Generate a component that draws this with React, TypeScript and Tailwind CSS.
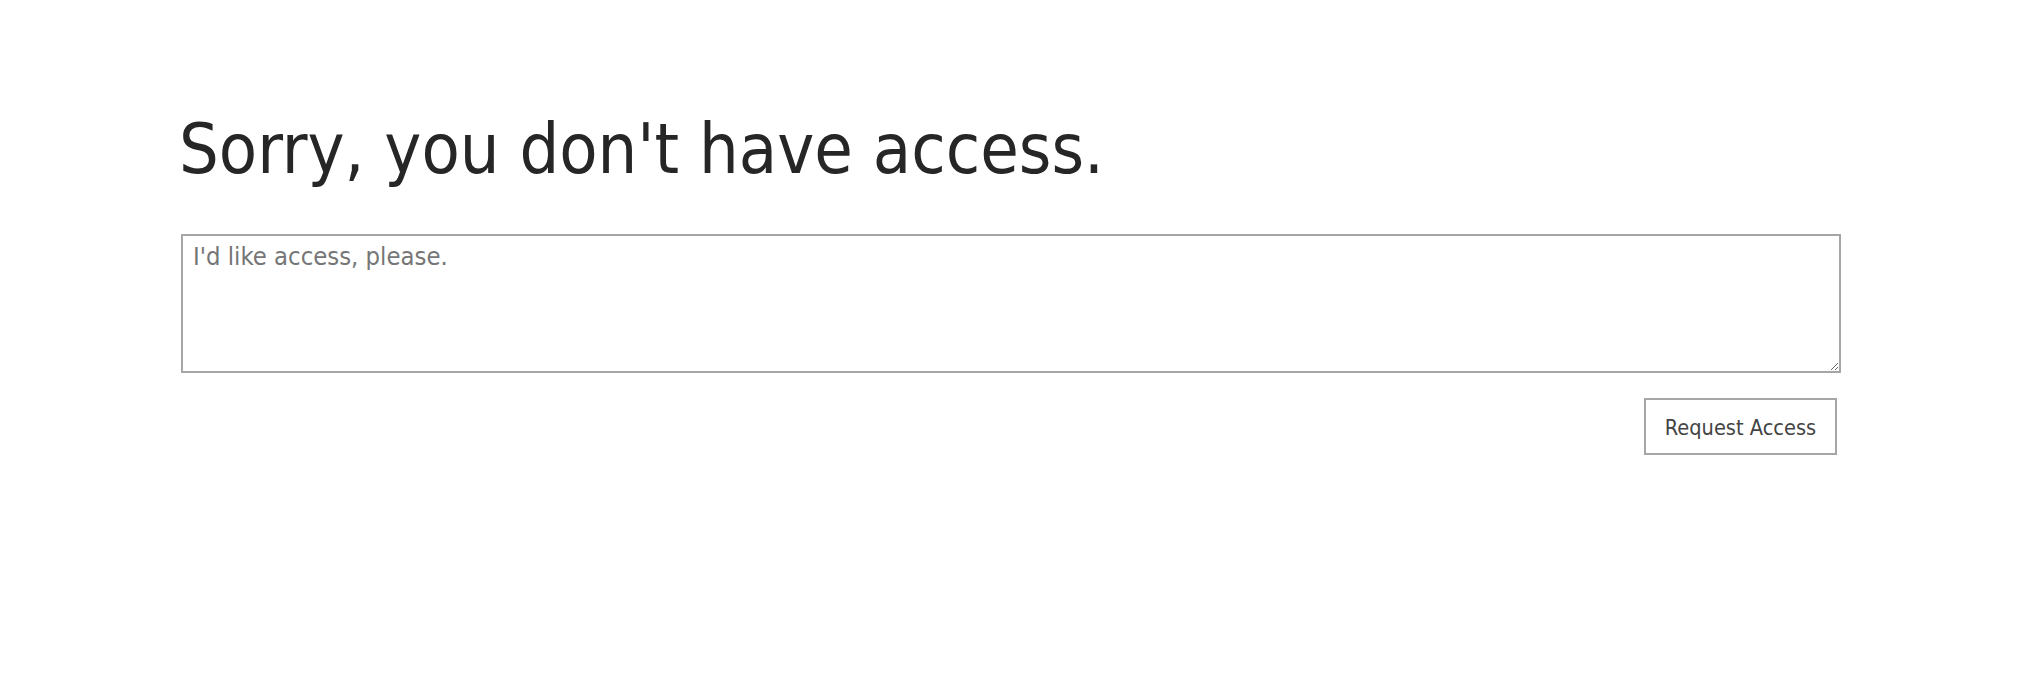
import React from "react";

export default function App() {
  return (
    <div className="min-h-[696px] w-full bg-white font-['DejaVu_Sans_Condensed','DejaVu_Sans',sans-serif] font-stretch-condensed">
      <div className="ml-[181px] w-[1660px] pt-[114px]">
        <h1 className="-ml-[2px] text-[69.7px] leading-none font-normal text-[#262626]">
          Sorry, you don't have access.
        </h1>
        <textarea
          className="mt-[50px] block h-[139px] w-[1660px] border-2 border-[#a6a6a6] bg-white pl-[10px] pr-[10px] pt-[6px] text-[25.4px] leading-[29px] text-[#262626] outline-none placeholder:text-[#767676]"
          placeholder="I'd like access, please."
        />
        <div className="mt-[25px] flex justify-end pr-[4px]">
          <button className="flex h-[57px] w-[193px] items-center justify-center border-2 border-[#a6a6a6] bg-white pt-[4px] text-[21.6px] text-[#444444]">
            Request Access
          </button>
        </div>
      </div>
    </div>
  );
}
